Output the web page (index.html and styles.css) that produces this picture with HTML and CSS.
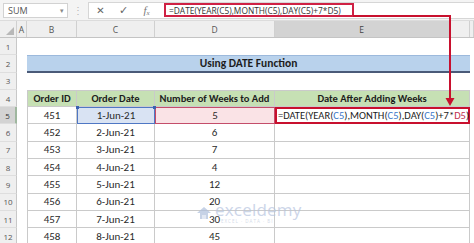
FILE: index.html
```html
<!DOCTYPE html>
<html lang="en">
<head>
  <meta charset="UTF-8">
  <title>Using DATE Function</title>
  <link rel="stylesheet" href="styles.css">
</head>
<body>

<!--编辑栏-->
<div class="formula-bar">
  <div class="name-box">SUM<span class="drop">&#9662;</span></div>
  <div class="sep">&#8942;</div>
  <div class="formula-input">
    <span class="fbtn">&#10005;</span>
    <span class="fbtn check">&#10003;</span>
    <span class="fbtn fx">f<sub>x</sub></span>
    <div class="formula-text">=DATE(YEAR(C5),MONTH(C5),DAY(C5)+7*D5)</div>
  </div>
</div>

<!--表格-->
<div class="sheet">
  <div class="row head">
    <div class="corner"></div>
    <div class="ch">A</div>
    <div class="ch">B</div>
    <div class="ch">C</div>
    <div class="ch">D</div>
    <div class="ch on"><span>E</span></div>
    <div class="ch"></div>
  </div>

  <div class="row">
    <div class="rh">1</div><div></div><div></div><div></div><div></div><div></div><div></div>
  </div>

  <div class="row">
    <div class="rh">2</div><div></div>
    <div class="title">Using DATE Function</div>
    <div></div>
  </div>

  <div class="row">
    <div class="rh">3</div><div></div><div></div><div></div><div></div><div></div><div></div>
  </div>

  <div class="row">
    <div class="rh">4</div><div></div>
    <div class="t th first">Order ID</div>
    <div class="t th">Order Date</div>
    <div class="t th">Number of Weeks to Add</div>
    <div class="t th">Date After Adding Weeks</div>
    <div></div>
  </div>

  <div class="row">
    <div class="rh on">5</div><div></div>
    <div class="t first">451</div>
    <div class="t ref-c">1-Jun-21</div>
    <div class="t ref-d">5</div>
    <div class="t edit">=DATE(YEAR(<span class="blue">C5</span>),MONTH(<span class="blue">C5</span>),DAY(<span class="blue">C5</span>)+7*<span class="red">D5</span>)</div>
    <div></div>
  </div>

  <div class="row">
    <div class="rh">6</div><div></div>
    <div class="t first">452</div><div class="t">2-Jun-21</div><div class="t">6</div><div class="t"></div><div></div>
  </div>
  <div class="row">
    <div class="rh">7</div><div></div>
    <div class="t first">453</div><div class="t">3-Jun-21</div><div class="t">7</div><div class="t"></div><div></div>
  </div>
  <div class="row">
    <div class="rh">8</div><div></div>
    <div class="t first">454</div><div class="t">4-Jun-21</div><div class="t">4</div><div class="t"></div><div></div>
  </div>
  <div class="row">
    <div class="rh">9</div><div></div>
    <div class="t first">455</div><div class="t">5-Jun-21</div><div class="t">12</div><div class="t"></div><div></div>
  </div>
  <div class="row">
    <div class="rh">10</div><div></div>
    <div class="t first">456</div><div class="t">6-Jun-21</div><div class="t">20</div><div class="t"></div><div></div>
  </div>
  <div class="row">
    <div class="rh">11</div><div></div>
    <div class="t first">457</div><div class="t">7-Jun-21</div><div class="t">30</div><div class="t"></div><div></div>
  </div>
  <div class="row">
    <div class="rh">12</div><div></div>
    <div class="t first">458</div><div class="t">8-Jun-21</div><div class="t">45</div><div class="t"></div><div></div>
  </div>
</div>

<!--红色箭头-->
<svg class="arrow" width="474" height="243" viewBox="0 0 474 243">
  <path d="M353 16 H450 V100" fill="none" stroke="#c8102e" stroke-width="2"/>
  <path d="M445.5 98 L454.5 98 L450 106 Z" fill="#c8102e"/>
</svg>

<!--水印-->
<div class="mark">
  <svg width="16" height="14" viewBox="0 0 16 14">
    <path d="M8 1 L15 7 L12 7 L12 13 L4 13 L4 7 L1 7 Z" fill="#aebfdc"/>
    <path d="M6 9 L10 9 L10 13 L6 13 Z" fill="#d6dfee"/>
  </svg>
  <div>
    <div class="mark-name">exceldemy</div>
    <div class="mark-tag">EXCEL · DATA · BI</div>
  </div>
</div>

</body>
</html>
```

FILE: styles.css
```css
* {
  margin: 0;
  padding: 0;
  box-sizing: border-box;
}

body {
  width: 474px;
  height: 243px;
  overflow: hidden;
  background-color: #fff;
  font-family: Carlito, Lato, "Liberation Sans", sans-serif;
  color: #222;
  position: relative;
}

/*编辑栏*/
.formula-bar {
  height: 21px;
  background-color: #f4f4f4;
  display: flex;
  align-items: center;
  border-bottom: 1px solid #dcdcdc;
}

.name-box {
  width: 65px;
  height: 15px;
  margin-left: 3px;
  background-color: #fff;
  border: 1px solid #d2d2d2;
  font-family: "Open Sans", sans-serif;
  font-size: 9px;
  color: #555;
  display: flex;
  align-items: center;
  justify-content: space-between;
  padding: 0 3px 0 4px;
}

.drop {
  font-size: 7px;
  color: #888;
}

.sep {
  width: 20px;
  text-align: center;
  color: #b5b5b5;
  font-size: 10px;
}

.formula-input {
  flex: 1;
  height: 17px;
  background-color: #fff;
  border: 1px solid #d6d6d6;
  border-right: none;
  display: flex;
  align-items: center;
}

.fbtn {
  width: 23px;
  text-align: center;
  color: #666;
  font-size: 10px;
  font-family: "DejaVu Sans", sans-serif;
}

.check {
  font-size: 11px;
}

.fx {
  font-family: "Liberation Serif", serif;
  font-style: italic;
  font-size: 11px;
  color: #777;
}

.fx sub {
  font-size: 7px;
  vertical-align: -1px;
}

.formula-text {
  margin-left: 6px;
  width: 190px;
  height: 14px;
  border: 2px solid #cf2144;
  font-family: "Open Sans", sans-serif;
  font-size: 8.4px;
  color: #333;
  display: flex;
  align-items: center;
  padding-left: 3px;
  white-space: nowrap;
}

/*单元格*/
.row {
  display: grid;
  grid-template-columns: 17px 10px 50px 78px 120px 195px 4px;
  height: 17.3px;
}

.row > div {
  display: flex;
  align-items: center;
  justify-content: center;
  white-space: nowrap;
}

.row.head {
  height: 17px;
  background-color: #efefef;
  border-bottom: 1px solid #c4c4c4;
}

.corner {
  position: relative;
  border-right: 1px solid #d0d0d0;
}

/*左上角的小三角*/
.corner::after {
  content: "";
  position: absolute;
  right: 2px;
  bottom: 2px;
  border-left: 8px solid transparent;
  border-bottom: 8px solid #b8b8b8;
}

.ch {
  font-family: "Open Sans", sans-serif;
  font-size: 8.5px;
  color: #555;
  border-right: 1px solid #d0d0d0;
}

.ch.on {
  background: linear-gradient(to right, #d3d3d3 174px, #efefef 174px);
  padding-right: 21px;
  color: #444;
}

.rh {
  background-color: #efefef;
  border-right: 1px solid #c8c8c8;
  border-bottom: 1px solid #dedede;
  font-family: "Open Sans", sans-serif;
  font-size: 8px;
  color: #555;
}

.rh.on {
  background-color: #d3d3d3;
  border-right: 2px solid #9fb79f;
  color: #333;
}

.title {
  grid-column: span 4;
  background-color: #b9d2ec;
  border-top: 1px solid #9cb9dc;
  border-bottom: 2px solid #4a5a78;
  font-weight: bold;
  font-size: 11.5px;
  color: #1d1d1d;
}

.t {
  border-right: 1px solid #cacaca;
  border-bottom: 1px solid #cacaca;
  font-size: 11px;
  color: #2a2a2a;
}

.t.first {
  border-left: 1px solid #cacaca;
}

.th {
  background-color: #c6e0b4;
  border-top: 1px solid #cacaca;
  font-weight: bold;
  font-size: 10.5px;
  color: #1d1d1d;
}

/*被引用的单元格*/
.ref-c {
  background-color: #d9e3f3;
  border: 1px solid #4f77c4;
  position: relative;
}

.ref-c::before,
.ref-c::after {
  content: "";
  position: absolute;
  top: -2px;
  width: 3px;
  height: 3px;
  background-color: #3b62b0;
}

.ref-c::before {
  left: -2px;
}

.ref-c::after {
  right: -2px;
}

.ref-d {
  background-color: #fae3e6;
  border: 1px solid #c44d6a;
}

.t.edit {
  border: 2px solid #c8102e;
  justify-content: flex-start;
  padding-left: 1px;
  font-size: 10.5px;
  color: #1d1d1d;
}

.blue {
  color: #3c78c8;
}

.red {
  color: #c2304f;
}

/*箭头和水印盖在表格上*/
.arrow {
  position: absolute;
  left: 0;
  top: 0;
  pointer-events: none;
}

.mark {
  position: absolute;
  left: 196px;
  top: 201px;
  display: flex;
  align-items: center;
  gap: 3px;
  opacity: 0.7;
}

.mark-name {
  font-family: "Open Sans", sans-serif;
  font-size: 17px;
  line-height: 17px;
  color: #b7c5df;
  letter-spacing: 0.2px;
}

.mark-tag {
  font-family: "Open Sans", sans-serif;
  font-size: 4.5px;
  color: #c3cde0;
  letter-spacing: 1px;
  padding-left: 6px;
}
```
